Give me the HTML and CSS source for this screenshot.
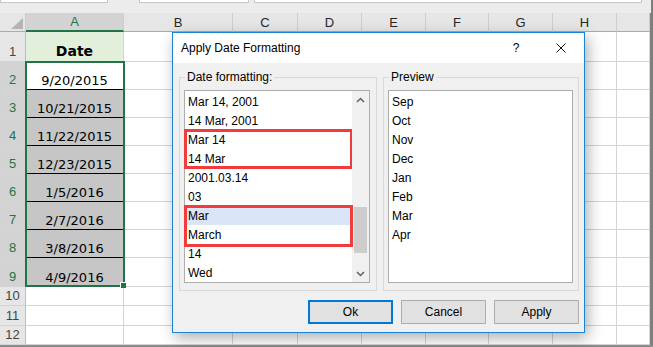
FILE: index.html
```html
<!DOCTYPE html>
<html>
<head>
<meta charset="utf-8">
<title>Apply Date Formatting</title>
<link rel="stylesheet" href="styles.css">
</head>
<body>
<div class="app">
  <div class="ribbon">
    <div class="fbox fb1"></div>
    <div class="fbox fb2"></div>
    <div class="fbox fb3"></div>
  </div>
  <div class="sheet">
    <div class="ch corner"><svg width="25" height="18" viewBox="0 0 25 18"><polygon points="23,5 23,16 11,16" fill="#b4b4b4"/></svg></div>
    <div class="ch on">A</div>
    <div class="ch">B</div>
    <div class="ch">C</div>
    <div class="ch">D</div>
    <div class="ch">E</div>
    <div class="ch">F</div>
    <div class="ch">G</div>
    <div class="ch">H</div>
    <div class="ch"></div>
    <div class="edge"></div>

    <div class="rh">1</div>
    <div class="c date-h">Date</div>
    <div class="c"></div><div class="c"></div><div class="c"></div><div class="c"></div><div class="c"></div><div class="c"></div><div class="c"></div><div class="c"></div>
    <div class="edge"></div>

    <div class="rh on">2</div>
    <div class="c d">9/20/2015</div>
    <div class="c"></div><div class="c"></div><div class="c"></div><div class="c"></div><div class="c"></div><div class="c"></div><div class="c"></div><div class="c"></div>
    <div class="edge"></div>

    <div class="rh on">3</div>
    <div class="c d shade">10/21/2015</div>
    <div class="c"></div><div class="c"></div><div class="c"></div><div class="c"></div><div class="c"></div><div class="c"></div><div class="c"></div><div class="c"></div>
    <div class="edge"></div>

    <div class="rh on">4</div>
    <div class="c d shade">11/22/2015</div>
    <div class="c"></div><div class="c"></div><div class="c"></div><div class="c"></div><div class="c"></div><div class="c"></div><div class="c"></div><div class="c"></div>
    <div class="edge"></div>

    <div class="rh on">5</div>
    <div class="c d shade">12/23/2015</div>
    <div class="c"></div><div class="c"></div><div class="c"></div><div class="c"></div><div class="c"></div><div class="c"></div><div class="c"></div><div class="c"></div>
    <div class="edge"></div>

    <div class="rh on">6</div>
    <div class="c d shade">1/5/2016</div>
    <div class="c"></div><div class="c"></div><div class="c"></div><div class="c"></div><div class="c"></div><div class="c"></div><div class="c"></div><div class="c"></div>
    <div class="edge"></div>

    <div class="rh on">7</div>
    <div class="c d shade">2/7/2016</div>
    <div class="c"></div><div class="c"></div><div class="c"></div><div class="c"></div><div class="c"></div><div class="c"></div><div class="c"></div><div class="c"></div>
    <div class="edge"></div>

    <div class="rh on">8</div>
    <div class="c d shade">3/8/2016</div>
    <div class="c"></div><div class="c"></div><div class="c"></div><div class="c"></div><div class="c"></div><div class="c"></div><div class="c"></div><div class="c"></div>
    <div class="edge"></div>

    <div class="rh on">9</div>
    <div class="c d shade last">4/9/2016</div>
    <div class="c"></div><div class="c"></div><div class="c"></div><div class="c"></div><div class="c"></div><div class="c"></div><div class="c"></div><div class="c"></div>
    <div class="edge"></div>

    <div class="rh">10</div>
    <div class="c"></div><div class="c"></div><div class="c"></div><div class="c"></div><div class="c"></div><div class="c"></div><div class="c"></div><div class="c"></div><div class="c"></div>
    <div class="edge"></div>

    <div class="rh">11</div>
    <div class="c"></div><div class="c"></div><div class="c"></div><div class="c"></div><div class="c"></div><div class="c"></div><div class="c"></div><div class="c"></div><div class="c"></div>
    <div class="edge"></div>

    <div class="rh">12</div>
    <div class="c"></div><div class="c"></div><div class="c"></div><div class="c"></div><div class="c"></div><div class="c"></div><div class="c"></div><div class="c"></div><div class="c"></div>
    <div class="edge"></div>
  </div>
  <div class="bottom"></div>

  <div class="selection"><span class="handle"></span></div>

  <div class="dialog">
    <div class="titlebar">
      <span class="title">Apply Date Formatting</span>
      <span class="help">?</span>
      <svg class="close" width="10" height="10" viewBox="0 0 10 10"><path d="M0.5 0.5L9.5 9.5M9.5 0.5L0.5 9.5" stroke="#111" stroke-width="1" fill="none"/></svg>
    </div>
    <div class="dbody">
      <div class="groups">
        <fieldset class="group g1">
          <legend>Date formatting:</legend>
          <div class="listbox">
            <div class="items">
              <div class="item">Mar 14, 2001</div>
              <div class="item">14 Mar, 2001</div>
              <div class="mark">
                <div class="item">Mar 14</div>
                <div class="item">14 Mar</div>
              </div>
              <div class="item">2001.03.14</div>
              <div class="item">03</div>
              <div class="mark mark2">
                <div class="item sel">Mar</div>
                <div class="item">March</div>
              </div>
              <div class="item">14</div>
              <div class="item">Wed</div>
            </div>
            <div class="sb">
              <div class="sb-arrow"><svg width="9" height="6" viewBox="0 0 9 6"><path d="M1 5L4.5 1.5L8 5" fill="none" stroke="#606060" stroke-width="1.5"/></svg></div>
              <div class="sb-track"><div class="thumb"></div></div>
              <div class="sb-arrow"><svg width="9" height="6" viewBox="0 0 9 6"><path d="M1 1L4.5 4.5L8 1" fill="none" stroke="#606060" stroke-width="1.5"/></svg></div>
            </div>
          </div>
        </fieldset>
        <fieldset class="group g2">
          <legend>Preview</legend>
          <div class="listbox">
            <div class="items">
              <div class="item">Sep</div>
              <div class="item">Oct</div>
              <div class="item">Nov</div>
              <div class="item">Dec</div>
              <div class="item">Jan</div>
              <div class="item">Feb</div>
              <div class="item">Mar</div>
              <div class="item">Apr</div>
            </div>
          </div>
        </fieldset>
      </div>
      <div class="buttons">
        <button class="btn def">Ok</button>
        <button class="btn">Cancel</button>
        <button class="btn">Apply</button>
      </div>
    </div>
  </div>
</div>
</body>
</html>
```

FILE: styles.css
```css
* { box-sizing: border-box; }
html, body { margin: 0; padding: 0; }
body {
  width: 653px;
  height: 347px;
  overflow: hidden;
  background: #fff;
  font-family: "Liberation Sans", Arial, sans-serif;
}
.app {
  position: relative;
  width: 653px;
  height: 347px;
  overflow: hidden;
  display: flex;
  flex-direction: column;
}

/* top strip */
.ribbon {
  height: 13px;
  background: #ececec;
  display: flex;
  align-items: flex-start;
  border-right: 2px solid #7f7f7f;
}
.fbox {
  height: 3px;
  background: #fff;
  border: 1px solid #c6c6c6;
  border-top: 0;
}
.fb1 { width: 108px; }
.fb2 { width: 110px; margin-left: 31px; }
.fb3 { width: 388px; margin-left: 5px; }

/* sheet grid */
.sheet {
  display: grid;
  grid-template-columns: 26px 98px 109px 65px 64px 64px 63px 64px 64px 33px 3px;
  grid-template-rows: 19px 30px repeat(7, 28px) 29px 19px 20px 19px;
}
.c {
  background: #fff;
  border-right: 1px solid #d4d4d4;
  border-bottom: 1px solid #d4d4d4;
}
.ch {
  background: #e6e6e6;
  border-right: 1px solid #cdcdcd;
  border-bottom: 1px solid #ababab;
  display: flex;
  align-items: center;
  justify-content: center;
  font-size: 13px;
  color: #262626;
}
.ch.on {
  background: #d3d3d3;
  color: #217346;
  border-bottom: 2px solid #217346;
}
.corner { justify-content: flex-start; align-items: flex-start; }
.corner svg { display: block; }
.rh {
  background: #e6e6e6;
  border-right: 1px solid #bdbdbd;
  border-bottom: 1px solid #d4d4d4;
  display: flex;
  align-items: flex-end;
  justify-content: center;
  padding-bottom: 1px;
  font-size: 13px;
  line-height: 16px;
  color: #444;
}
.rh.on { background: #d3d3d3; color: #217346; }
.edge { background: #7f7f7f; }

.date-h {
  background: #e2efda;
  font: bold 14px "DejaVu Sans", Verdana, sans-serif;
  line-height: 16px;
  display: flex;
  align-items: flex-end;
  justify-content: center;
  padding-bottom: 2px;
  color: #000;
}
.d {
  font: 13px "DejaVu Sans", Verdana, sans-serif;
  line-height: 16px;
  display: flex;
  align-items: flex-end;
  justify-content: center;
  border-bottom: 1px solid #000;
  color: #000;
}
.d.shade { background: #c6c6c6; }
.d.last { border-bottom-color: #d4d4d4; }

.bottom { height: 2px; background: #8c8c8c; }

/* selection marquee over A2:A9 */
.selection {
  position: absolute;
  left: 25px;
  top: 61px;
  width: 100px;
  height: 226px;
  border: 2px solid #217346;
}
.handle {
  position: absolute;
  right: -3px;
  bottom: -3px;
  width: 6px;
  height: 6px;
  background: #217346;
  border-left: 1px solid #fff;
  border-top: 1px solid #fff;
}

/* dialog */
.dialog {
  position: absolute;
  left: 172px;
  top: 32px;
  width: 413px;
  height: 301px;
  border: 1px solid #1883d7;
  background: #f0f0f0;
  box-shadow: 3px 5px 14px rgba(0, 0, 0, 0.32);
  display: flex;
  flex-direction: column;
  font-size: 12px;
  color: #000;
}
.titlebar {
  height: 30px;
  background: #fff;
  display: flex;
  align-items: center;
  padding-left: 8px;
}
.help {
  margin-left: auto;
  width: 10px;
  text-align: center;
}
.close { margin-left: 35px; margin-right: 18px; display: block; }

.dbody {
  flex: 1;
  padding: 7px 5px 8px 6px;
  display: flex;
  flex-direction: column;
}
.groups { display: flex; gap: 6px; }
.group {
  margin: 0;
  min-width: 0;
  border: 1px solid #d9d9d9;
  padding: 0 6px 7px 4px;
}
.g1 { width: 198px; }
.g2 { width: 196px; padding-right: 5px; }
.group legend {
  padding: 0 2px;
  margin-left: 1px;
  font-size: 12px;
  line-height: 15px;
}
.listbox {
  margin-top: 5px;
  height: 193px;
  border: 1px solid #adadad;
  background: #fff;
  display: flex;
}
.items { flex: 1; min-width: 0; padding-top: 1px; }
.item {
  height: 19px;
  line-height: 21px;
  padding-left: 3px;
  white-space: nowrap;
  overflow: hidden;
}
.item.sel { background: #dae5f7; }
.mark {
  outline: 3px solid #f03c3c;
  outline-offset: -2px;
}
.mark2 { padding-bottom: 2px; margin-bottom: -2px; position: relative; }
.sb {
  width: 17px;
  background: #f0f0f0;
  display: flex;
  flex-direction: column;
}
.sb-arrow {
  height: 17px;
  display: flex;
  align-items: center;
  justify-content: center;
}
.sb-arrow svg { display: block; }
.sb-track { flex: 1; }
.thumb {
  margin: 99px 2px 0 2px;
  height: 46px;
  background: #cdcdcd;
}

.buttons {
  margin-top: 9px;
  display: flex;
  justify-content: flex-end;
  gap: 8px;
}
.btn {
  width: 85px;
  height: 24px;
  padding: 0;
  margin: 0;
  border: 1px solid #adadad;
  background: #e1e1e1;
  font: 12px "Liberation Sans", Arial, sans-serif;
  color: #000;
  display: flex;
  align-items: center;
  justify-content: center;
}
.btn.def { border: 2px solid #0078d7; }
```
